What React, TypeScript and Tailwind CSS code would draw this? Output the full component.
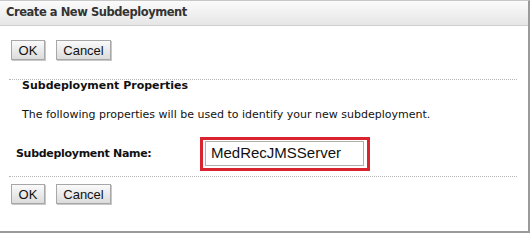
const tahoma = { fontFamily: 'Tahoma, "DejaVu Sans", sans-serif' };

function Btn({ label, w }: { label: string; w: string }) {
  return (
    <button
      type="button"
      className={`${w} h-[20px] border border-[#a7a7a7] bg-gradient-to-b from-[#fafafa] to-[#dcdcdc] text-[13px] leading-none text-[#111] shadow-[1px_1px_0_#c8c8c8] font-['Liberation_Sans',Arial,sans-serif]`}
    >
      {label}
    </button>
  );
}

function ButtonRow() {
  return (
    <div className="flex gap-[11px] pl-[11px]">
      <Btn label="OK" w="w-[34px]" />
      <Btn label="Cancel" w="w-[55px]" />
    </div>
  );
}

export default function App() {
  return (
    <div className="w-[531px] h-[234px] bg-white overflow-hidden">
      <div className="w-[530px] h-[233px] border-t border-t-[#c8c8c8] border-r-[2px] border-r-[#9a9a9a] border-b-[2px] border-b-[#9a9a9a] flex flex-col">
        <div
          className="h-[25px] shrink-0 bg-gradient-to-b from-[#fbfbfb] to-[#e6e6e6] border-b border-[#cfcfcf] flex items-center pl-[6px] text-[11.5px] tracking-[-0.45px] font-bold text-[#333]"
          style={tahoma}
        >
          Create a New Subdeployment
        </div>
        <div className="pt-[14px]">
          <ButtonRow />
        </div>
        <div className="mx-[9px] mr-[11px] mt-[19px] border-t border-dotted border-[#b5b5b5]" />
        <div className="pl-[22px] text-[11px] text-[#111]" style={tahoma}>
          <div className="font-bold leading-[14px] mt-[-1px]">Subdeployment Properties</div>
          <div className="leading-[14px] mt-[15px]">
            The following properties will be used to identify your new subdeployment.
          </div>
        </div>
        <div className="flex items-center mt-[15px]">
          <div className="w-[200px] pl-[16px] text-[11px] tracking-[-0.3px] font-bold text-[#111]" style={tahoma}>
            Subdeployment Name:
          </div>
          <div className="border-[3px] border-[#d9232e] w-[170px] h-[34px] pl-[2px] pt-[1px]">
            <div className="w-[159px] h-[25px] border border-[#b0b0b0] flex items-center pl-[5px] text-[15px] text-[#111] font-['Liberation_Sans',Arial,sans-serif]">
              MedRecJMSServer
            </div>
          </div>
        </div>
        <div className="mx-[9px] mr-[11px] mt-[5px] border-t border-dotted border-[#b5b5b5]" />
        <div className="pt-[7px]">
          <ButtonRow />
        </div>
      </div>
    </div>
  );
}
